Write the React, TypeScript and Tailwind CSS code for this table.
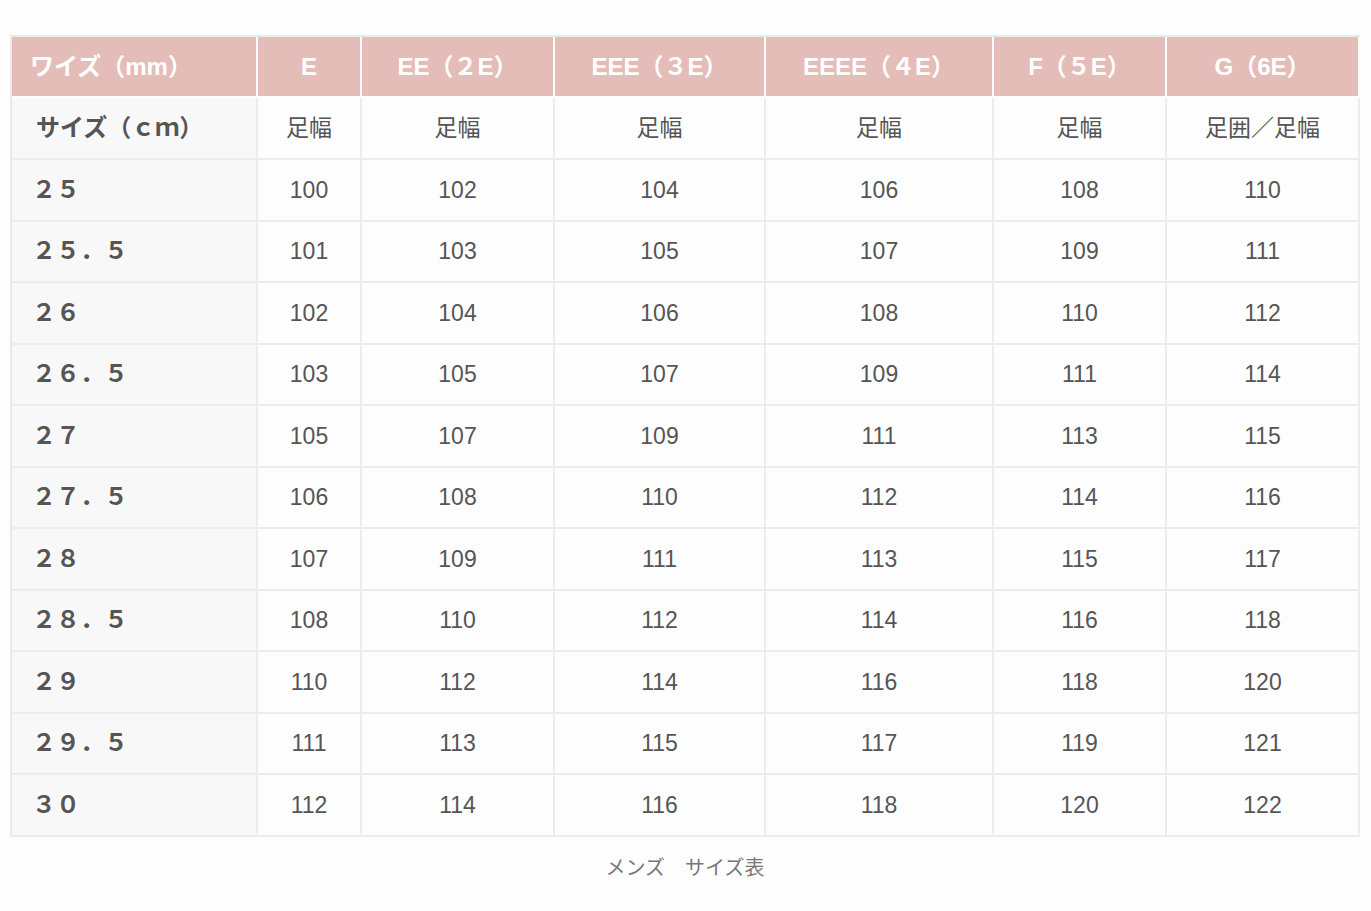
import React from 'react';

const columns = [
  { label: 'ワイズ（mm）', sub: 'サイズ（ｃｍ）' },
  { label: 'E', sub: '足幅' },
  { label: 'EE（２E）', sub: '足幅' },
  { label: 'EEE（３E）', sub: '足幅' },
  { label: 'EEEE（４E）', sub: '足幅' },
  { label: 'F（５E）', sub: '足幅' },
  { label: 'G（6E）', sub: '足囲／足幅' },
];

const rows: [string, number[]][] = [
  ['２５', [100, 102, 104, 106, 108, 110]],
  ['２５．５', [101, 103, 105, 107, 109, 111]],
  ['２６', [102, 104, 106, 108, 110, 112]],
  ['２６．５', [103, 105, 107, 109, 111, 114]],
  ['２７', [105, 107, 109, 111, 113, 115]],
  ['２７．５', [106, 108, 110, 112, 114, 116]],
  ['２８', [107, 109, 111, 113, 115, 117]],
  ['２８．５', [108, 110, 112, 114, 116, 118]],
  ['２９', [110, 112, 114, 116, 118, 120]],
  ['２９．５', [111, 113, 115, 117, 119, 121]],
  ['３０', [112, 114, 116, 118, 120, 122]],
];

const App: React.FC = () => {
  return (
    <div className="min-h-[911px] bg-[#fdfdfd] pl-[10px] pr-[11px] pt-[35px] font-['Liberation_Sans','Noto_Sans_CJK_JP',sans-serif] text-[#555]">
      <table className="w-[1350px] table-fixed border-separate border-spacing-0 border-t-2 border-l-2 border-[#eaeaea]">
        <colgroup>
          <col className="w-[246px]" />
          <col className="w-[104px]" />
          <col className="w-[193px]" />
          <col className="w-[211px]" />
          <col className="w-[228px]" />
          <col className="w-[173px]" />
          <col className="w-[193px]" />
        </colgroup>
        <thead>
          <tr className="h-[61px]">
            {columns.map((c, i) => (
              <th
                key={i}
                className={`bg-[#e4bdb9] text-[24px] font-bold text-white border-r-2 border-b-2 border-white ${
                  i === 0 ? 'text-left pl-[18px]' : 'text-center'
                }`}
              >
                {c.label}
              </th>
            ))}
          </tr>
        </thead>
        <tbody>
          <tr className="h-[62px]">
            {columns.map((c, i) => (
              <td
                key={i}
                className={`border-r-2 border-b-2 border-[#ececec] ${
                  i === 0 ? 'bg-[#f8f8f8] pl-[24px] text-left text-[24px] font-bold' : 'bg-[#fdfdfd] text-center text-[23px]'
                }`}
              >
                {c.sub}
              </td>
            ))}
          </tr>
          {rows.map(([size, vals]) => (
            <tr key={size} className="h-[61.5px]">
              <td className="border-r-2 border-b-2 border-[#ececec] bg-[#f8f8f8] pl-5 text-left text-[24px] font-bold">
                {size}
              </td>
              {vals.map((v, j) => (
                <td key={j} className="border-r-2 border-b-2 border-[#ececec] bg-[#fdfdfd] text-center text-[23px]">
                  {v}
                </td>
              ))}
            </tr>
          ))}
        </tbody>
      </table>
      <p className="mt-4 text-center text-[20px] text-[#777]">メンズ　サイズ表</p>
    </div>
  );
};

export default App;
